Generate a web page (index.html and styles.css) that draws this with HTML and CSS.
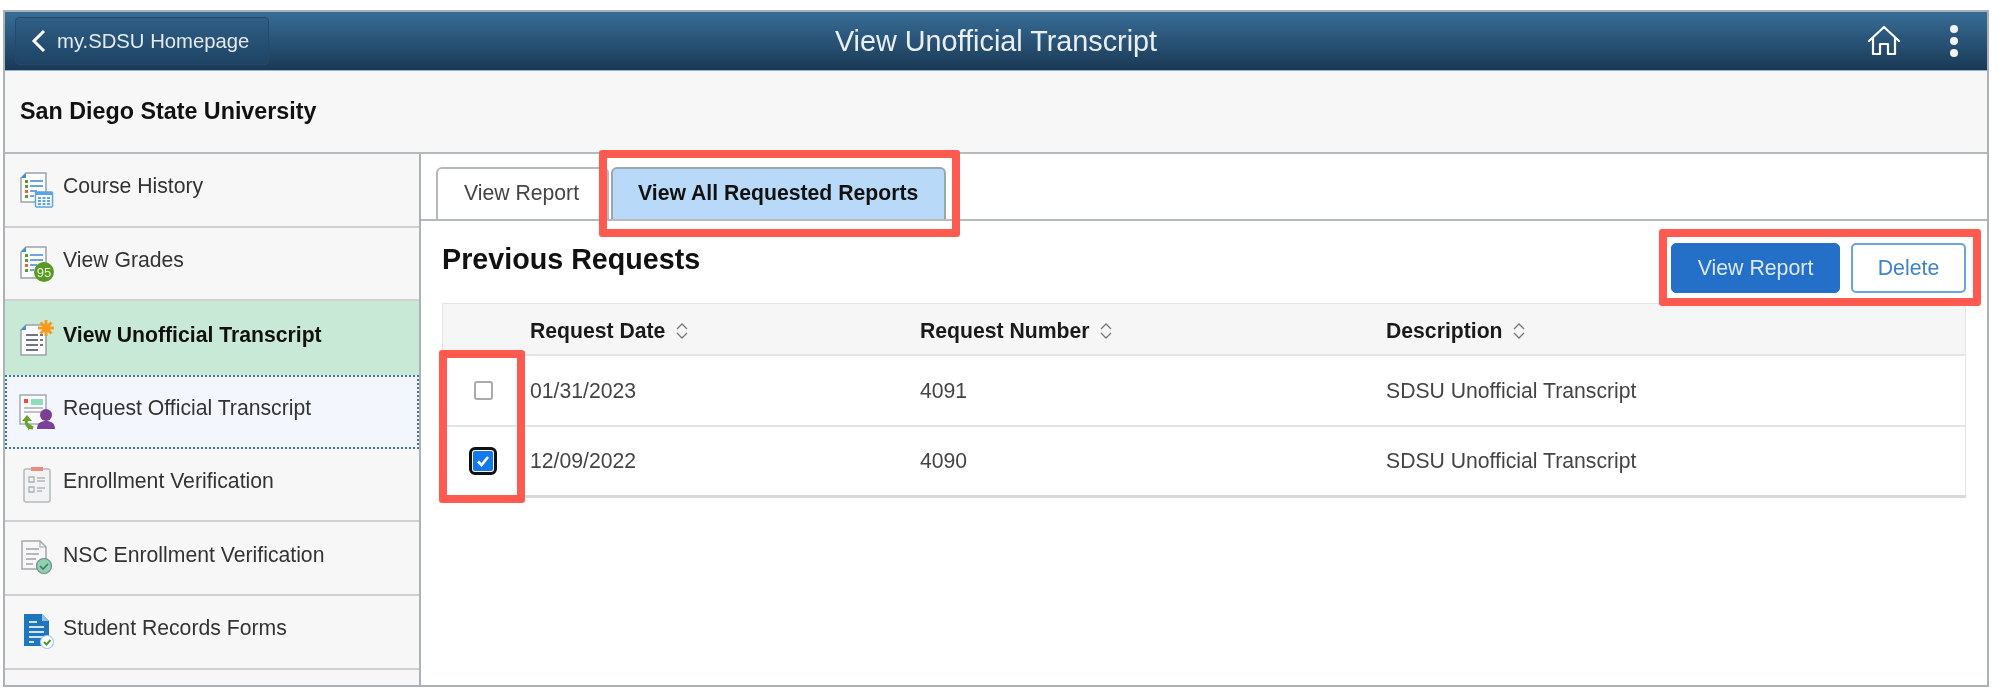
FILE: index.html
```html
<!DOCTYPE html>
<html>
<head>
    <title>View Unofficial Transcript</title>
    <link rel="stylesheet" href="styles.css">
</head>
<body>
    <div class="frame">
        <header class="banner">
            <div class="banner-left">
                <button class="back-btn">
                    <svg width="16" height="24" viewBox="0 0 16 24"><path d="M13 2 L3 12 L13 22" fill="none" stroke="#fff" stroke-width="3"/></svg>
                    <span>my.SDSU Homepage</span>
                </button>
            </div>
            <h1 class="banner-title">View Unofficial Transcript</h1>
            <div class="banner-right">
                <svg class="home-icon" width="34" height="32" viewBox="0 0 34 32"><path d="M2 16 L17 2 L32 16 M6 13 V29 H13 V19 H21 V29 H28 V13" fill="none" stroke="#fff" stroke-width="2.2" stroke-linejoin="round" stroke-linecap="round"/></svg>
                <div class="dots"><i></i><i></i><i></i></div>
            </div>
        </header>

        <div class="org-bar">San Diego State University</div>

        <div class="main">
            <nav class="sidebar">
                <a class="nav-item">
                    <svg class="nav-icon" width="36" height="38" viewBox="0 0 36 38">
                        <path d="M7 2 H27 V31 H2 V7 Z" fill="#fbfbfb" stroke="#9aa3ab" stroke-width="1.5"/>
                        <path d="M7 2 V7 H2 Z" fill="#3f8fd8"/>
                        <path d="M11 10 H24 M11 15 H24 M11 20 H18 M11 25 H15" stroke="#6aa6dc" stroke-width="1.8"/>
                        <rect x="6" y="9" width="3" height="3" fill="#5c9a2e"/><rect x="6" y="14" width="3" height="3" fill="#5c9a2e"/>
                        <rect x="6" y="19" width="3" height="3" fill="#e0604c"/><rect x="6" y="24" width="3" height="3" fill="#5c9a2e"/>
                        <rect x="16.5" y="21" width="17" height="15" rx="1" fill="#fff" stroke="#5aa5e0" stroke-width="1.5"/>
                        <rect x="16.5" y="21" width="17" height="3" fill="#5aa5e0"/>
                        <path d="M19 27 H31 M19 30 H31 M19 33 H31" stroke="#5aa5e0" stroke-width="2" stroke-dasharray="3 1.5"/>
                    </svg>
                    <span>Course History</span>
                </a>
                <a class="nav-item">
                    <svg class="nav-icon" width="36" height="38" viewBox="0 0 36 38">
                        <path d="M7 2 H27 V33 H2 V7 Z" fill="#fbfbfb" stroke="#9aa3ab" stroke-width="1.5"/>
                        <path d="M7 2 V7 H2 Z" fill="#3f8fd8"/>
                        <path d="M11 10 H24 M11 15 H24 M11 20 H18 M11 25 H15" stroke="#6aa6dc" stroke-width="1.8"/>
                        <rect x="6" y="9" width="3" height="3" fill="#5c9a2e"/><rect x="6" y="14" width="3" height="3" fill="#5c9a2e"/>
                        <rect x="6" y="19" width="3" height="3" fill="#e0604c"/><rect x="6" y="24" width="3" height="3" fill="#5c9a2e"/>
                        <circle cx="25" cy="27" r="10" fill="#5a9a22"/>
                        <text x="25" y="31.5" class="badge-num">95</text>
                    </svg>
                    <span>View Grades</span>
                </a>
                <a class="nav-item selected">
                    <svg class="nav-icon" width="36" height="38" viewBox="0 0 36 38">
                        <path d="M7 6 H27 V36 H2 V11 Z" fill="#fbfbfb" stroke="#9aa3ab" stroke-width="1.5"/>
                        <path d="M7 6 V11 H2 Z" fill="#3f8fd8"/>
                        <path d="M7 16 H19 M7 21 H19 M7 26 H19 M7 31 H19" stroke="#6b7680" stroke-width="1.8"/>
                        <path d="M21 16 H24 M21 21 H24 M21 26 H24" stroke="#6b7680" stroke-width="1.8"/>
                        <path d="M27 1 V17 M19 9 H35 M21.5 3.5 L32.5 14.5 M32.5 3.5 L21.5 14.5" stroke="#f59a1c" stroke-width="3"/>
                    </svg>
                    <span>View Unofficial Transcript</span>
                </a>
                <a class="nav-item focused">
                    <svg class="nav-icon" width="36" height="38" viewBox="0 0 36 38">
                        <rect x="1" y="2" width="26" height="29" fill="#fbfbfb" stroke="#a5abb0" stroke-width="1.5"/>
                        <rect x="5" y="6" width="4" height="4" fill="#ee4f42"/>
                        <rect x="12" y="6" width="12" height="6" fill="#8fdcc0"/>
                        <path d="M5 15 H24 M5 19 H24" stroke="#a9aeb3" stroke-width="1.6"/>
                        <path d="M14 35 C8 35 6 30 8 26" fill="none" stroke="#6aa32c" stroke-width="3"/>
                        <path d="M3 28 L8 22 L13 28 Z" fill="#6aa32c"/>
                        <path d="M9 30 L15 34 L9 37 Z" fill="#6aa32c"/>
                        <circle cx="27" cy="22" r="6" fill="#7b3f98"/>
                        <path d="M18 36 C18 30 22 28 27 28 C32 28 36 30 36 36 Z" fill="#7b3f98"/>
                    </svg>
                    <span>Request Official Transcript</span>
                </a>
                <a class="nav-item">
                    <svg class="nav-icon" width="36" height="38" viewBox="0 0 36 38">
                        <rect x="5" y="3" width="26" height="33" rx="2" fill="#f1f2f3" stroke="#b4b9bd" stroke-width="1.5"/>
                        <rect x="12" y="1" width="12" height="4" fill="#ea8a80"/>
                        <path d="M10 11 H15 V16 H10 Z M10 21 H15 V26 H10 Z" fill="none" stroke="#aab0b5" stroke-width="1.3"/>
                        <path d="M18 12 H26 M18 15 H26 M18 22 H26 M18 25 H23" stroke="#b1b6ba" stroke-width="1.4"/>
                    </svg>
                    <span>Enrollment Verification</span>
                </a>
                <a class="nav-item">
                    <svg class="nav-icon" width="36" height="38" viewBox="0 0 36 38">
                        <path d="M3 2 H21 L27 8 V30 H3 Z" fill="#f7f7f7" stroke="#a3a8ad" stroke-width="1.5"/>
                        <path d="M21 2 V8 H27" fill="none" stroke="#a3a8ad" stroke-width="1.2"/>
                        <path d="M7 10 H20 M7 15 H20 M7 20 H17 M7 25 H14" stroke="#b4b8bc" stroke-width="1.8"/>
                        <circle cx="25" cy="27" r="7.5" fill="#8ed2b0" stroke="#79858c" stroke-width="1.2"/>
                        <path d="M21 27 L24 30 L29 25" fill="none" stroke="#3f7d63" stroke-width="1.6"/>
                    </svg>
                    <span>NSC Enrollment Verification</span>
                </a>
                <a class="nav-item">
                    <svg class="nav-icon" width="36" height="38" viewBox="0 0 36 38">
                        <path d="M5 1 H23 L30 8 V33 H5 Z" fill="#2076bd"/>
                        <path d="M23 1 V8 H30 Z" fill="#8fc3ec"/>
                        <path d="M10 9 H18 M10 14 H25 M10 19 H25 M10 24 H25 M10 29 H15" stroke="#cfe3f4" stroke-width="1.8"/>
                        <circle cx="28" cy="29" r="6.5" fill="#fff" stroke="#9fcbee" stroke-width="1.2"/>
                        <path d="M25 29 L27.5 31.5 L31.5 27" fill="none" stroke="#4f9a25" stroke-width="2"/>
                    </svg>
                    <span>Student Records Forms</span>
                </a>
            </nav>

            <section class="content">
                <div class="tabs">
                    <div class="tab">View Report</div>
                    <div class="tab active">View All Requested Reports</div>
                </div>

                <div class="content-head">
                    <h2 class="section-title">Previous Requests</h2>
                    <div class="actions">
                        <button class="btn primary">View Report</button>
                        <button class="btn outline">Delete</button>
                    </div>
                </div>

                <table class="requests">
                    <thead>
                        <tr>
                            <th class="col-check"></th>
                            <th class="col-date">Request Date <svg class="sort" width="14" height="18" viewBox="0 0 14 18"><path d="M2 7 L7 2 L12 7 M2 11 L7 16 L12 11" fill="none" stroke="#777" stroke-width="1.3"/></svg></th>
                            <th class="col-num">Request Number <svg class="sort" width="14" height="18" viewBox="0 0 14 18"><path d="M2 7 L7 2 L12 7 M2 11 L7 16 L12 11" fill="none" stroke="#777" stroke-width="1.3"/></svg></th>
                            <th>Description <svg class="sort" width="14" height="18" viewBox="0 0 14 18"><path d="M2 7 L7 2 L12 7 M2 11 L7 16 L12 11" fill="none" stroke="#777" stroke-width="1.3"/></svg></th>
                        </tr>
                    </thead>
                    <tbody>
                        <tr class="row-a">
                            <td class="cell-check"><span class="check"></span></td>
                            <td>01/31/2023</td>
                            <td>4091</td>
                            <td>SDSU Unofficial Transcript</td>
                        </tr>
                        <tr class="row-b">
                            <td class="cell-check">
                                <span class="check on">
                                    <svg width="16" height="16" viewBox="0 0 16 16"><path d="M3 8.5 L6.5 12 L13 4" fill="none" stroke="#fff" stroke-width="2.6"/></svg>
                                </span>
                            </td>
                            <td>12/09/2022</td>
                            <td>4090</td>
                            <td>SDSU Unofficial Transcript</td>
                        </tr>
                    </tbody>
                </table>
            </section>
        </div>
    </div>

    <!-- Annotation boxes -->
    <div class="mark mark-tab"></div>
    <div class="mark mark-actions"></div>
    <div class="mark mark-checks"></div>
</body>
</html>
```
FILE: styles.css
```css
body {
    font-family: 'Liberation Sans', Arial, sans-serif;
    margin: 0;
    padding: 10px 10px 13px 3px;
    background: #fff;
    color: #333;
    height: 700px;
    box-sizing: border-box;
    position: relative;
    overflow: hidden;
    filter: blur(0.4px);
}

.frame {
    height: 677px;
    box-sizing: border-box;
    border: 2px solid #abb1b6;
    display: flex;
    flex-direction: column;
}

/* Top banner */
.banner {
    height: 59px;
    flex: none;
    box-sizing: border-box;
    display: grid;
    grid-template-columns: 1fr auto 1fr;
    align-items: center;
    padding: 0 10px;
    background: linear-gradient(#386d97, #1a3955);
    border-bottom: 1px solid #8fb5da;
}

.back-btn {
    display: flex;
    align-items: center;
    gap: 10px;
    width: 254px;
    height: 48px;
    box-sizing: border-box;
    padding: 0 0 0 15px;
    background: linear-gradient(#2f5f86, #1e4364);
    border: 1px solid #24496a;
    border-radius: 4px;
    color: #e4e9ee;
    font-family: inherit;
    font-size: 20.3px;
}

.banner-title {
    margin: 0;
    font-size: 28.8px;
    font-weight: 400;
    color: #e9eef3;
}

.banner-right {
    display: flex;
    justify-content: flex-end;
    align-items: center;
    gap: 49px;
    padding-right: 19px;
}

.dots {
    display: flex;
    flex-direction: column;
    gap: 4px;
}

.dots i {
    display: block;
    width: 8px;
    height: 8px;
    border-radius: 50%;
    background: #f2f5f7;
}

.org-bar {
    height: 83px;
    flex: none;
    box-sizing: border-box;
    display: flex;
    align-items: center;
    padding-left: 15px;
    background: #f7f7f7;
    border-bottom: 2px solid #b5babe;
    color: #111;
    font-size: 23.3px;
    font-weight: 700;
}

.main {
    flex: 1;
    display: flex;
    min-height: 0;
}

/* Left navigation */
.sidebar {
    width: 416px;
    flex: none;
    background: #f7f7f7;
    border-right: 2px solid #abb1b6;
    box-sizing: border-box;
}

.nav-item {
    height: 73.7px;
    box-sizing: border-box;
    display: flex;
    align-items: center;
    gap: 8px;
    padding-left: 14px;
    border-bottom: 2px solid #cfd2d4;
    font-size: 21.2px;
    color: #333;
}

.nav-item span {
    padding-bottom: 7px;
}

.nav-icon {
    flex: none;
}

.badge-num {
    font-size: 13px;
    fill: #e8f2dc;
    text-anchor: middle;
}

.nav-item.selected {
    background: #c8e9d6;
    color: #111;
    font-weight: 700;
    border-bottom: none;
}

.nav-item.focused {
    background: #f3f7fd;
    border: 2px dotted #3c71a8;
    padding-left: 12px;
}

/* Tabs + table */
.content {
    flex: 1;
    min-width: 0;
    background: #fff;
}

.tabs {
    height: 67px;
    box-sizing: border-box;
    display: flex;
    align-items: flex-end;
    padding-left: 15px;
    border-bottom: 2px solid #b5babe;
}

.tab {
    height: 52px;
    box-sizing: border-box;
    display: flex;
    align-items: center;
    padding: 0 28px 2px 26px;
    background: #fff;
    border: 2px solid #b5babe;
    border-bottom: none;
    border-radius: 6px 6px 0 0;
    font-size: 21.2px;
    color: #444;
}

.tab.active {
    margin-left: 2px;
    padding: 0 26px 2px 25px;
    background: #b8daf8;
    border-color: #9aa6b0;
    color: #111;
    font-weight: 700;
}

.content-head {
    display: flex;
    justify-content: space-between;
    padding: 22px 21px 0 21px;
}

.section-title {
    margin: 0;
    font-size: 28.7px;
    line-height: 33px;
    color: #111;
}

.actions {
    display: flex;
    gap: 11px;
}

.btn {
    height: 50px;
    box-sizing: border-box;
    border-radius: 5px;
    font-family: inherit;
    font-size: 21.3px;
}

.btn.primary {
    width: 169px;
    background: #2470c8;
    border: 1px solid #2470c8;
    color: #dce8f6;
}

.btn.outline {
    width: 115px;
    background: #fff;
    border: 2px solid #6ba3dc;
    color: #3f83cc;
}

.requests {
    width: 1524px;
    margin: 10px 0 0 21px;
    border-collapse: collapse;
    font-size: 21.2px;
    color: #444;
    border: 1px solid #e2e4e6;
    border-bottom: 3px solid #d7dadd;
}

.requests th {
    height: 47px;
    padding: 3px 0 0;
    background: #f6f6f6;
    text-align: left;
    color: #1a1a1a;
    border-bottom: 2px solid #e2e4e6;
}

.requests td {
    padding: 0;
}

.row-a td {
    height: 69px;
    border-bottom: 2px solid #e2e4e6;
}

.row-b td {
    height: 68px;
}

.col-check {
    width: 87px;
}

.col-date {
    width: 390px;
}

.col-num {
    width: 466px;
}

.sort {
    vertical-align: -2px;
    margin-left: 4px;
}

.cell-check {
    text-align: center;
}

.check {
    display: inline-flex;
    align-items: center;
    justify-content: center;
    width: 19px;
    height: 19px;
    box-sizing: border-box;
    border: 2px solid #aaa;
    border-radius: 3px;
    background: #fff;
    vertical-align: middle;
    margin: 0 7px 2px 0;
}

.check.on {
    width: 20px;
    height: 20px;
    background: #1478f0;
    border: none;
    outline: 3px solid #111;
    outline-offset: 1px;
    border-radius: 2px;
}

/* Annotation boxes */
.mark {
    position: absolute;
    box-sizing: border-box;
    border: 8px solid #ff5a4f;
    border-radius: 3px;
}

.mark-tab {
    left: 599px;
    top: 150px;
    width: 361px;
    height: 87px;
}

.mark-actions {
    left: 1659px;
    top: 229px;
    width: 322px;
    height: 77px;
}

.mark-checks {
    left: 439px;
    top: 350px;
    width: 86px;
    height: 153px;
}
```
